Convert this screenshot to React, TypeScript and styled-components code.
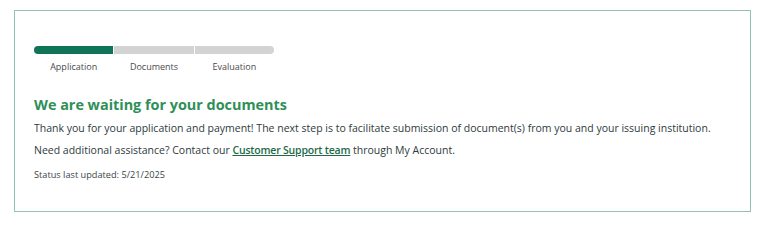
import styled, { createGlobalStyle } from "styled-components"

const GlobalStyle = createGlobalStyle`
  html, body {
    margin: 0;
    padding: 0;
    background: #ffffff;
  }
`

const Page = styled.div`
  padding: 10px 0 0 14px;
  width: 768px;
  height: 225px;
  box-sizing: border-box;
`

const Card = styled.section`
  width: 737px;
  height: 202px;
  box-sizing: border-box;
  border: 1px solid #93c2ae;
  padding: 35px 20px 0 19px;
  font-family: "Open Sans", sans-serif;
`

const Steps = styled.div`
  display: flex;
  gap: 1px;
  width: 240px;
`

const Step = styled.div`
  flex: 1;
  display: flex;
  flex-direction: column;
  align-items: center;
  gap: 6px;
`

const Bar = styled.div<{ $done: boolean; $first: boolean; $last: boolean }>`
  align-self: stretch;
  height: 8px;
  background: ${(p) => (p.$done ? "#0f7458" : "#d3d3d3")};
  border-radius: ${(p) =>
    p.$first ? "4px 0 0 4px" : p.$last ? "0 4px 4px 0" : "0"};
`

const StepLabel = styled.span`
  font-size: 9px;
  color: #4a4a4a;
`

const Title = styled.h2`
  margin: 22px 0 0;
  font-size: 14.4px;
  font-weight: 700;
  color: #2f8f58;
`

const Text = styled.p`
  margin: 6px 0 0;
  font-size: 10.5px;
  line-height: 16px;
  color: #2e3a40;
`

const Link = styled.a`
  color: #1d6b48;
  font-weight: 600;
  letter-spacing: -0.2px;
  text-decoration: underline;
`

const Status = styled.p`
  margin: 10px 0 0;
  font-size: 9.2px;
  color: #3b454a;
`

const steps = ["Application", "Documents", "Evaluation"]

export default function App() {
  return (
    <Page>
      <GlobalStyle />
      <Card>
        <Steps>
          {steps.map((s, i) => (
            <Step key={s}>
              <Bar
                $done={i === 0}
                $first={i === 0}
                $last={i === steps.length - 1}
              />
              <StepLabel>{s}</StepLabel>
            </Step>
          ))}
        </Steps>
        <Title>We are waiting for your documents</Title>
        <Text>
          Thank you for your application and payment! The next step is to
          facilitate submission of document(s) from you and your issuing
          institution.
        </Text>
        <Text>
          Need additional assistance? Contact our{" "}
          <Link href="#">Customer Support team</Link> through My Account.
        </Text>
        <Status>Status last updated: 5/21/2025</Status>
      </Card>
    </Page>
  )
}
